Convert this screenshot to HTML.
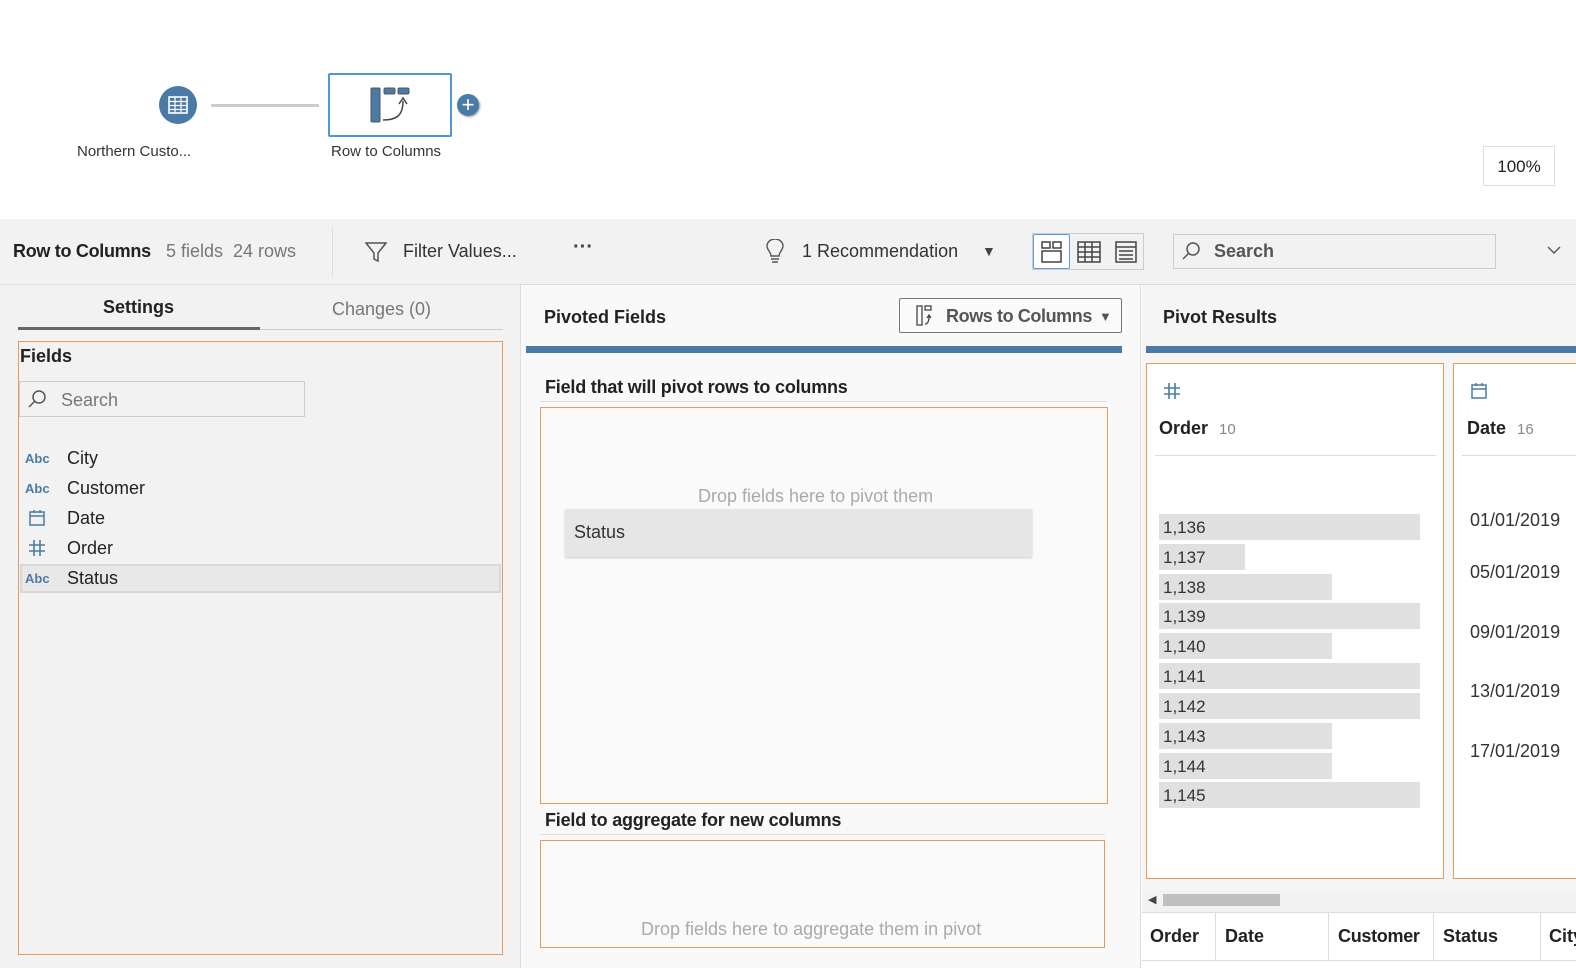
<!DOCTYPE html>
<html><head><meta charset="utf-8"><style>
*{box-sizing:border-box;margin:0;padding:0}
body{width:1576px;height:968px;overflow:hidden;background:#fff;font-family:"Liberation Sans",sans-serif;color:#222;position:relative}
.a{position:absolute}
.t{position:absolute;white-space:nowrap}
.bar{position:absolute;left:1159px;height:26px;background:#e0e0e0;font-size:17px;color:#333;padding-left:4px;line-height:27px}
.abc{font-size:13px;color:#4b7ba5;font-weight:bold}
</style></head><body>
<!-- canvas -->
<div class="a" style="left:159px;top:86px;width:38px;height:38px;border-radius:50%;background:#4a7aa6"></div>
<svg class="a" style="left:167px;top:94px" width="22" height="22" viewBox="0 0 22 22"><rect x="2" y="3" width="18" height="16" fill="none" stroke="#fff" stroke-width="1.6"/><path d="M2 7.5H20M2 11.5H20M2 15.5H20M8 3V19M14 3V19" stroke="#fff" stroke-width="1.2"/></svg>
<div class="a" style="left:211px;top:104px;width:108px;height:3px;background:#ccc"></div>
<div class="a" style="left:328px;top:73px;width:124px;height:64px;border:2px solid #4f95dc;border-radius:2px;background:#fff"></div>
<svg class="a" style="left:368px;top:86px" width="46" height="38" viewBox="0 0 46 38"><rect x="3" y="2" width="9" height="34" rx="1" fill="#4a7aa6" stroke="#555" stroke-width="1"/><rect x="16" y="2" width="11" height="6" rx="1.5" fill="#4a7aa6" stroke="#555"/><rect x="30" y="2" width="11" height="6" rx="1.5" fill="#4a7aa6" stroke="#555"/><path d="M15 34C28 34 35 30 35 15" fill="none" stroke="#444" stroke-width="1.5"/><path d="M31 18L35 12L39 18" fill="none" stroke="#444" stroke-width="1.5"/></svg>
<div class="a" style="left:457px;top:94px;width:22px;height:22px;border-radius:50%;background:#4a7aa6;box-shadow:1px 1px 2px #999;color:#fff;font-size:22px;line-height:21px;text-align:center">+</div>
<div class="t" style="left:77px;top:143px;font-size:15px;color:#333">Northern Custo...</div>
<div class="t" style="left:331px;top:143px;font-size:15px;color:#333">Row to Columns</div>
<div class="a" style="left:1483px;top:146px;width:72px;height:40px;border:1px solid #ddd;background:#fff;font-size:17px;line-height:40px;text-align:center">100%</div>
<!-- toolbar -->
<div class="a" style="left:0;top:219px;width:1576px;height:66px;background:#f2f2f2;border-bottom:1px solid #ddd"></div>
<div class="t" style="left:13px;top:241px;font-size:18px;font-weight:bold;letter-spacing:-0.3px">Row to Columns</div>
<div class="t" style="left:166px;top:241px;font-size:18px;color:#777">5 fields&nbsp; 24 rows</div>
<div class="a" style="left:332px;top:228px;width:1px;height:48px;background:#ddd"></div>
<svg class="a" style="left:365px;top:241px" width="22" height="22" viewBox="0 0 22 22"><path d="M1 2H21L13 12V20L9 18V12Z" fill="none" stroke="#555" stroke-width="1.5"/></svg>
<div class="t" style="left:403px;top:241px;font-size:18px;color:#333">Filter Values...</div>
<div class="t" style="left:573px;top:236px;font-size:20px;font-weight:bold;color:#444">···</div>
<svg class="a" style="left:765px;top:239px" width="20" height="26" viewBox="0 0 20 26"><path d="M6 17C6 13 2 11 2 7A8 7 0 0 1 18 7C18 11 14 13 14 17Z" fill="none" stroke="#555" stroke-width="1.4"/><path d="M6 20H14M7 23H13" stroke="#555" stroke-width="1.4"/></svg>
<div class="t" style="left:802px;top:241px;font-size:18px;color:#333">1 Recommendation</div>
<div class="t" style="left:982px;top:243px;font-size:14px;color:#444">▼</div>
<div class="a" style="left:1032px;top:233px;width:112px;height:37px;border:1px solid #ccc;background:#f2f2f2"></div>
<div class="a" style="left:1033px;top:234px;width:37px;height:35px;border:1px solid #5b9be0;border-radius:2px;background:#fff"></div>
<svg class="a" style="left:1040px;top:240px" width="24" height="24" viewBox="0 0 24 24" fill="none" stroke="#444" stroke-width="1.5"><rect x="2" y="2" width="8" height="6"/><rect x="13" y="2" width="8" height="6"/><rect x="2" y="11" width="19" height="11"/></svg>
<svg class="a" style="left:1077px;top:240px" width="24" height="24" viewBox="0 0 24 24" fill="none" stroke="#444" stroke-width="1.5"><rect x="1" y="2" width="22" height="20"/><path d="M1 7H23M1 12H23M1 17H23M8 2V22M15 2V22"/></svg>
<svg class="a" style="left:1114px;top:240px" width="24" height="24" viewBox="0 0 24 24" fill="none" stroke="#444" stroke-width="1.5"><rect x="2" y="2" width="20" height="20"/><path d="M2 7H22M5 11H19M5 15H19M5 19H19"/></svg>
<div class="a" style="left:1173px;top:234px;width:323px;height:35px;border:1px solid #ccc;background:#f2f2f2"></div>
<svg class="a" style="left:1181px;top:241px" width="20" height="20" viewBox="0 0 20 20" fill="none" stroke="#555" stroke-width="1.5"><circle cx="12" cy="8" r="6"/><path d="M8 12L2 18"/></svg>
<div class="t" style="left:1214px;top:241px;font-size:18px;color:#555;font-weight:bold">Search</div>
<svg class="a" style="left:1546px;top:244px" width="16" height="12" viewBox="0 0 16 12"><path d="M2 3L8 9L14 3" fill="none" stroke="#555" stroke-width="1.4"/></svg>
<!-- left panel -->
<div class="a" style="left:0;top:285px;width:521px;height:683px;background:#f2f2f2;border-right:1px solid #ddd"></div>
<div class="t" style="left:103px;top:297px;font-size:18px;font-weight:bold">Settings</div>
<div class="t" style="left:332px;top:299px;font-size:18px;color:#777">Changes (0)</div>
<div class="a" style="left:18px;top:329px;width:485px;height:1px;background:#ccc"></div>
<div class="a" style="left:18px;top:327px;width:242px;height:3px;background:#666"></div>
<div class="a" style="left:18px;top:341px;width:485px;height:614px;border:1px solid #e69b5c"></div>
<div class="t" style="left:20px;top:346px;font-size:18px;font-weight:bold">Fields</div>
<div class="a" style="left:19px;top:381px;width:286px;height:36px;border:1px solid #ccc;background:#f2f2f2"></div>
<svg class="a" style="left:27px;top:389px" width="20" height="20" viewBox="0 0 20 20" fill="none" stroke="#555" stroke-width="1.5"><circle cx="12" cy="8" r="6"/><path d="M8 12L2 18"/></svg>
<div class="t" style="left:61px;top:390px;font-size:18px;color:#777">Search</div>
<div class="a" style="left:20px;top:564px;width:481px;height:29px;background:#e8e8e8;border:2px solid #d8d8d8"></div>
<div class="t abc" style="left:25px;top:451px">Abc</div><div class="t" style="left:67px;top:448px;font-size:18px">City</div>
<div class="t abc" style="left:25px;top:481px">Abc</div><div class="t" style="left:67px;top:478px;font-size:18px">Customer</div>
<svg class="a" style="left:28px;top:509px" width="18" height="18" viewBox="0 0 18 18" fill="none" stroke="#4b7ba5" stroke-width="1.5"><rect x="2" y="3" width="14" height="13"/><path d="M2 7H16M6 1V4M12 1V4"/></svg><div class="t" style="left:67px;top:508px;font-size:18px">Date</div>
<svg class="a" style="left:28px;top:539px" width="18" height="18" viewBox="0 0 18 18" fill="none" stroke="#4b7ba5" stroke-width="1.6"><path d="M6 1V17M12 1V17M1 6H17M1 12H17"/></svg><div class="t" style="left:67px;top:538px;font-size:18px">Order</div>
<div class="t abc" style="left:25px;top:571px">Abc</div><div class="t" style="left:67px;top:568px;font-size:18px">Status</div>
<!-- middle -->
<div class="a" style="left:521px;top:285px;width:620px;height:683px;background:#f9f9f9;border-right:1px solid #ddd"></div>
<div class="t" style="left:544px;top:307px;font-size:18px;font-weight:bold">Pivoted Fields</div>
<div class="a" style="left:899px;top:298px;width:223px;height:35px;border:1px solid #777;border-radius:2px;background:#fafafa"></div>
<svg class="a" style="left:915px;top:305px" width="24" height="22" viewBox="0 0 24 22" fill="none" stroke="#444" stroke-width="1.3"><rect x="2" y="1" width="5" height="19"/><rect x="10" y="1" width="6" height="4"/><path d="M10 19C13 19 14 16 14 11M12 13L14 10L16 13"/></svg>
<div class="t" style="left:946px;top:306px;font-size:18px;color:#555;font-weight:bold;letter-spacing:-0.4px">Rows to Columns</div>
<div class="t" style="left:1099px;top:309px;font-size:13px;color:#555">▼</div>
<div class="a" style="left:526px;top:346px;width:596px;height:7px;background:#4a7aa6"></div>
<div class="t" style="left:545px;top:377px;font-size:18px;font-weight:bold;letter-spacing:-0.2px">Field that will pivot rows to columns</div>
<div class="a" style="left:540px;top:401px;width:567px;height:1px;background:#ddd"></div>
<div class="a" style="left:540px;top:407px;width:568px;height:397px;border:1px solid #e69b5c;background:#fafafa"></div>
<div class="t" style="left:698px;top:486px;font-size:18px;color:#aaa">Drop fields here to pivot them</div>
<div class="a" style="left:565px;top:509px;width:467px;height:48px;background:#e6e6e6;box-shadow:0 1px 2px #ccc"></div>
<div class="t" style="left:574px;top:522px;font-size:18px;color:#333">Status</div>
<div class="t" style="left:545px;top:810px;font-size:18px;font-weight:bold;letter-spacing:-0.2px">Field to aggregate for new columns</div>
<div class="a" style="left:540px;top:834px;width:565px;height:1px;background:#ddd"></div>
<div class="a" style="left:540px;top:840px;width:565px;height:108px;border:1px solid #e69b5c;background:#fafafa"></div>
<div class="t" style="left:641px;top:919px;font-size:18px;color:#aaa">Drop fields here to aggregate them in pivot</div>
<!-- right -->
<div class="a" style="left:1142px;top:285px;width:434px;height:683px;background:#f5f5f5"></div>
<div class="t" style="left:1163px;top:307px;font-size:18px;font-weight:bold">Pivot Results</div>
<div class="a" style="left:1146px;top:346px;width:430px;height:7px;background:#4a7aa6"></div>
<div class="a" style="left:1146px;top:363px;width:298px;height:516px;border:1px solid #e69b5c;background:#fff"></div>
<div class="a" style="left:1453px;top:363px;width:130px;height:516px;border:1px solid #e69b5c;background:#fff"></div>
<svg class="a" style="left:1163px;top:382px" width="18" height="18" viewBox="0 0 18 18" fill="none" stroke="#4b7ba5" stroke-width="1.6"><path d="M6 1V17M12 1V17M1 6H17M1 12H17"/></svg>
<svg class="a" style="left:1470px;top:382px" width="18" height="18" viewBox="0 0 18 18" fill="none" stroke="#4b7ba5" stroke-width="1.5"><rect x="2" y="3" width="14" height="13"/><path d="M2 7H16M6 1V4M12 1V4"/></svg>
<div class="t" style="left:1159px;top:418px;font-size:18px;font-weight:bold">Order <span style="font-weight:normal;color:#888;font-size:15px;margin-left:6px">10</span></div>
<div class="t" style="left:1467px;top:418px;font-size:18px;font-weight:bold">Date <span style="font-weight:normal;color:#888;font-size:15px;margin-left:6px">16</span></div>
<div class="a" style="left:1155px;top:455px;width:281px;height:1px;background:#ddd"></div>
<div class="a" style="left:1462px;top:455px;width:114px;height:1px;background:#ddd"></div>
<div class="bar" style="top:514px;width:261px">1,136</div>
<div class="bar" style="top:544px;width:86px">1,137</div>
<div class="bar" style="top:574px;width:173px">1,138</div>
<div class="bar" style="top:603px;width:261px">1,139</div>
<div class="bar" style="top:633px;width:173px">1,140</div>
<div class="bar" style="top:663px;width:261px">1,141</div>
<div class="bar" style="top:693px;width:261px">1,142</div>
<div class="bar" style="top:723px;width:173px">1,143</div>
<div class="bar" style="top:753px;width:173px">1,144</div>
<div class="bar" style="top:782px;width:261px">1,145</div>
<div class="t" style="left:1470px;top:510px;font-size:18px;color:#333">01/01/2019</div>
<div class="t" style="left:1470px;top:562px;font-size:18px;color:#333">05/01/2019</div>
<div class="t" style="left:1470px;top:622px;font-size:18px;color:#333">09/01/2019</div>
<div class="t" style="left:1470px;top:681px;font-size:18px;color:#333">13/01/2019</div>
<div class="t" style="left:1470px;top:741px;font-size:18px;color:#333">17/01/2019</div>
<div class="a" style="left:1142px;top:890px;width:434px;height:22px;background:#f2f2f2"></div>
<div class="t" style="left:1148px;top:893px;font-size:11px;color:#444">◀</div>
<div class="a" style="left:1163px;top:894px;width:117px;height:12px;background:#c0c0c0"></div>
<div class="a" style="left:1142px;top:912px;width:434px;height:56px;background:#fff;border-top:1px solid #ddd"></div>
<div class="a" style="left:1215px;top:912px;width:1px;height:48px;background:#ddd"></div>
<div class="a" style="left:1328px;top:912px;width:1px;height:48px;background:#ddd"></div>
<div class="a" style="left:1433px;top:912px;width:1px;height:48px;background:#ddd"></div>
<div class="a" style="left:1540px;top:912px;width:1px;height:48px;background:#ddd"></div>
<div class="a" style="left:1142px;top:960px;width:434px;height:1px;background:#ddd"></div>
<div class="t" style="left:1150px;top:926px;font-size:18px;font-weight:bold">Order</div>
<div class="t" style="left:1225px;top:926px;font-size:18px;font-weight:bold">Date</div>
<div class="t" style="left:1338px;top:926px;font-size:18px;font-weight:bold;letter-spacing:-0.3px">Customer</div>
<div class="t" style="left:1443px;top:926px;font-size:18px;font-weight:bold">Status</div>
<div class="t" style="left:1549px;top:926px;font-size:18px;font-weight:bold">City</div>
</body></html>
